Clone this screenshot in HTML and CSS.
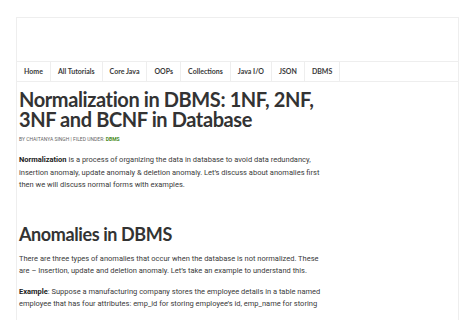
FILE: index.html
```html
<!DOCTYPE html>
<html lang="en">
<head>
    <meta charset="UTF-8">
    <title>Normalization in DBMS: 1NF, 2NF, 3NF and BCNF in Database</title>
    <link rel="stylesheet" href="styles.css">
</head>
<body>
    <div class="site">
        <div class="site-header"></div>
        <ul class="nav">
            <li>Home</li>
            <li>All Tutorials</li>
            <li>Core Java</li>
            <li>OOPs</li>
            <li>Collections</li>
            <li>Java I/O</li>
            <li>JSON</li>
            <li>DBMS</li>
        </ul>
        <div class="content">
            <h1 class="entry-title">Normalization in DBMS: 1NF, 2NF, 3NF and BCNF in Database</h1>
            <p class="entry-meta">By Chaitanya Singh | Filed Under: <a href="#">DBMS</a></p>
            <p><strong>Normalization</strong> is a process of organizing the data in database to avoid data redundancy, insertion anomaly, update anomaly &amp; deletion anomaly. Let’s discuss about anomalies first then we will discuss normal forms with examples.</p>
            <h2>Anomalies in DBMS</h2>
            <p>There are three types of anomalies that occur when the database is not normalized. These are – Insertion, update and deletion anomaly. Let’s take an example to understand this.</p>
            <p><strong>Example</strong>: Suppose a manufacturing company stores the employee details in a table named employee that has four attributes: emp_id for storing employee’s id, emp_name for storing</p>
        </div>
    </div>
</body>
</html>
```

FILE: styles.css
```css
body {
    margin: 0;
    background-color: #fff;
    color: #333;
    font-family: Roboto, sans-serif;
}

.site {
    margin: 17px 0 0 16px;
    width: 441px;
    height: 302px;
    border: 1px solid #eee;
    border-bottom: none;
}

.site-header {
    height: 43px;
    border-bottom: 1px solid #eee;
}

.nav {
    display: flex;
    list-style: none;
    margin: 0;
    padding: 0;
    height: 19px;
    border-bottom: 1px solid #eee;
}

.nav li {
    padding: 0 7px;
    line-height: 19px;
    font-family: Lato, sans-serif;
    font-size: 7px;
    font-weight: 700;
    color: #3a3a3a;
    border-right: 1px solid #eee;
}

.content {
    width: 304px;
    padding: 0 0 0 2px;
}

.entry-title {
    font-family: Lato, sans-serif;
    font-size: 20px;
    font-weight: 700;
    letter-spacing: -0.4px;
    line-height: 20px;
    margin: 7px 0 0;
    color: #333;
}

.content p {
    font-size: 7.5px;
    line-height: 12.5px;
    margin: 0 0 8px;
    color: #3a3a3a;
}

.content p.entry-meta {
    font-size: 5px;
    line-height: 8px;
    margin: 6px 0 11px;
    text-transform: uppercase;
    color: #666;
}

.entry-meta a {
    color: #4b8b1e;
    font-weight: 700;
    text-decoration: none;
}

.content strong {
    color: #222;
}

.content h2 {
    font-family: Lato, sans-serif;
    font-size: 18px;
    font-weight: 700;
    letter-spacing: -0.4px;
    margin: 30px 0 7px;
    line-height: 24px;
    color: #333;
}
```
